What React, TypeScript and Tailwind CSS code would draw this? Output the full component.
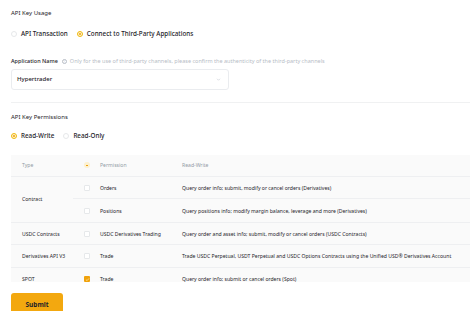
import React from 'react';

const Radio: React.FC<{ checked?: boolean; label: string }> = ({ checked, label }) => (
  <label className="flex items-center gap-[4px]">
    {checked ? (
      <span className="w-[6px] h-[6px] rounded-full border border-[#f0b90b] bg-[#fdf3d6] flex items-center justify-center">
        <span className="w-[2px] h-[2px] rounded-full bg-[#f0a20b]"></span>
      </span>
    ) : (
      <span className="w-[6px] h-[6px] rounded-full border border-[#e6e8ea] bg-white"></span>
    )}
    <span className="text-[6.3px] text-[#1e2329] font-medium">{label}</span>
  </label>
);

const Check: React.FC<{ checked?: boolean }> = ({ checked }) =>
  checked ? (
    <span className="w-[6px] h-[6px] rounded-[1px] bg-[#f0a20b] flex items-center justify-center">
      <svg viewBox="0 0 8 8" className="w-[5px] h-[5px]">
        <path d="M1.5 4.2 L3.3 5.8 L6.5 2.2" stroke="#fde7b0" strokeWidth="1.2" fill="none" />
      </svg>
    </span>
  ) : (
    <span className="w-[6px] h-[6px] rounded-[1px] border border-[#e6e8ea] bg-white"></span>
  );

const Row: React.FC<{ type?: string; perm: string; desc: string; checked?: boolean; border?: boolean }> = ({
  type,
  perm,
  desc,
  checked,
  border = true,
}) => (
  <div className={`flex h-[22.5px] items-center ${border ? 'border-b border-[#eeeff1]' : ''}`}>
    {type !== undefined && <div className="w-[62px] pl-[11px] shrink-0">{type}</div>}
    <div className="w-[16px] pl-[11px] shrink-0 box-content flex">
      <Check checked={checked} />
    </div>
    <div className="w-[71px] shrink-0">{perm}</div>
    <div className="pl-[11px] whitespace-nowrap">{desc}</div>
  </div>
);

const App: React.FC = () => {
  return (
    <div className="w-[474px] h-[311px] overflow-hidden bg-white px-[11px] font-['Noto_Sans',sans-serif] text-[#1e2329]">
      {/* API Key Usage */}
      <div className="pt-[9px] text-[6px] leading-[8px]">API Key Usage</div>
      <div className="mt-[12px] flex items-center gap-[9px]">
        <Radio label="API Transaction" />
        <Radio checked label="Connect to Third-Party Applications" />
      </div>

      {/* Application Name */}
      <div className="mt-[19px] flex items-center gap-[3px] text-[5.5px] leading-[8px]">
        <span className="text-[#1e2329] font-medium">Application Name</span>
        <span className="w-[5px] h-[5px] rounded-full border-[0.5px] border-[#b7bdc6] text-[4px] leading-[4px] text-center text-[#b7bdc6] ml-[1px]">!</span>
        <span className="text-[#b7bdc6]">Only for the use of third-party channels, please confirm the authenticity of the third-party channels</span>
      </div>
      <div className="mt-[4px] w-[218px] h-[21px] rounded-[3px] border border-[#eaecef] flex items-center justify-between px-[5px]">
        <span className="text-[6px] font-medium">Hypertrader</span>
        <svg viewBox="0 0 10 10" className="w-[5px] h-[5px] mr-[2px]">
          <path d="M2 3.5 L5 6.5 L8 3.5" stroke="#b7bdc6" strokeWidth="1" fill="none" />
        </svg>
      </div>

      <div className="mt-[12px] border-t border-[#f0f1f2] w-[459px]"></div>

      {/* API Key Permissions */}
      <div className="mt-[10px] text-[6px] leading-[8px]">API Key Permissions</div>
      <div className="mt-[10px] flex items-center gap-[9px]">
        <Radio checked label="Read-Write" />
        <Radio label="Read-Only" />
      </div>

      <div className="mt-[14px] w-[459px] h-[127px] overflow-hidden bg-[#fafafa] text-[5.1px] leading-[8px]">
        <div className="flex h-[22px] items-center border-b border-[#eeeff1] text-[#929aa5]">
          <div className="w-[62px] pl-[11px] shrink-0">Type</div>
          <div className="w-[16px] pl-[11px] shrink-0 box-content flex">
            <span className="w-[6px] h-[6px] rounded-full bg-[#fdf1d0] flex items-center justify-center">
              <span className="w-[2px] h-[1px] bg-[#f0a20b]"></span>
            </span>
          </div>
          <div className="w-[71px] shrink-0">Permission</div>
          <div className="pl-[11px]">Read-Write</div>
        </div>

        <div className="flex border-b border-[#eeeff1]">
          <div className="w-[62px] pl-[11px] shrink-0 flex items-center">Contract</div>
          <div className="flex-1">
            <Row perm="Orders" desc="Query order info; submit, modify or cancel orders (Derivatives)" />
            <Row perm="Positions" desc="Query positions info; modify margin balance, leverage and more (Derivatives)" border={false} />
          </div>
        </div>
        <Row type="USDC Contracts" perm="USDC Derivatives Trading" desc="Query order and asset info; submit, modify or cancel orders (USDC Contracts)" />
        <Row
          type="Derivatives API V3"
          perm="Trade"
          desc="Trade USDC Perpetual, USDT Perpetual and USDC Options Contracts using the Unified USD® Derivatives Account"
        />
        <Row type="SPOT" perm="Trade" desc="Query order info; submit or cancel orders (Spot)" checked border={false} />
      </div>

      <button className="mt-[11px] w-[52px] h-[24px] rounded-[3px] bg-[#f3a80f] text-[6.5px] font-bold text-[#1e2329]">
        Submit
      </button>
    </div>
  );
};

export default App;
